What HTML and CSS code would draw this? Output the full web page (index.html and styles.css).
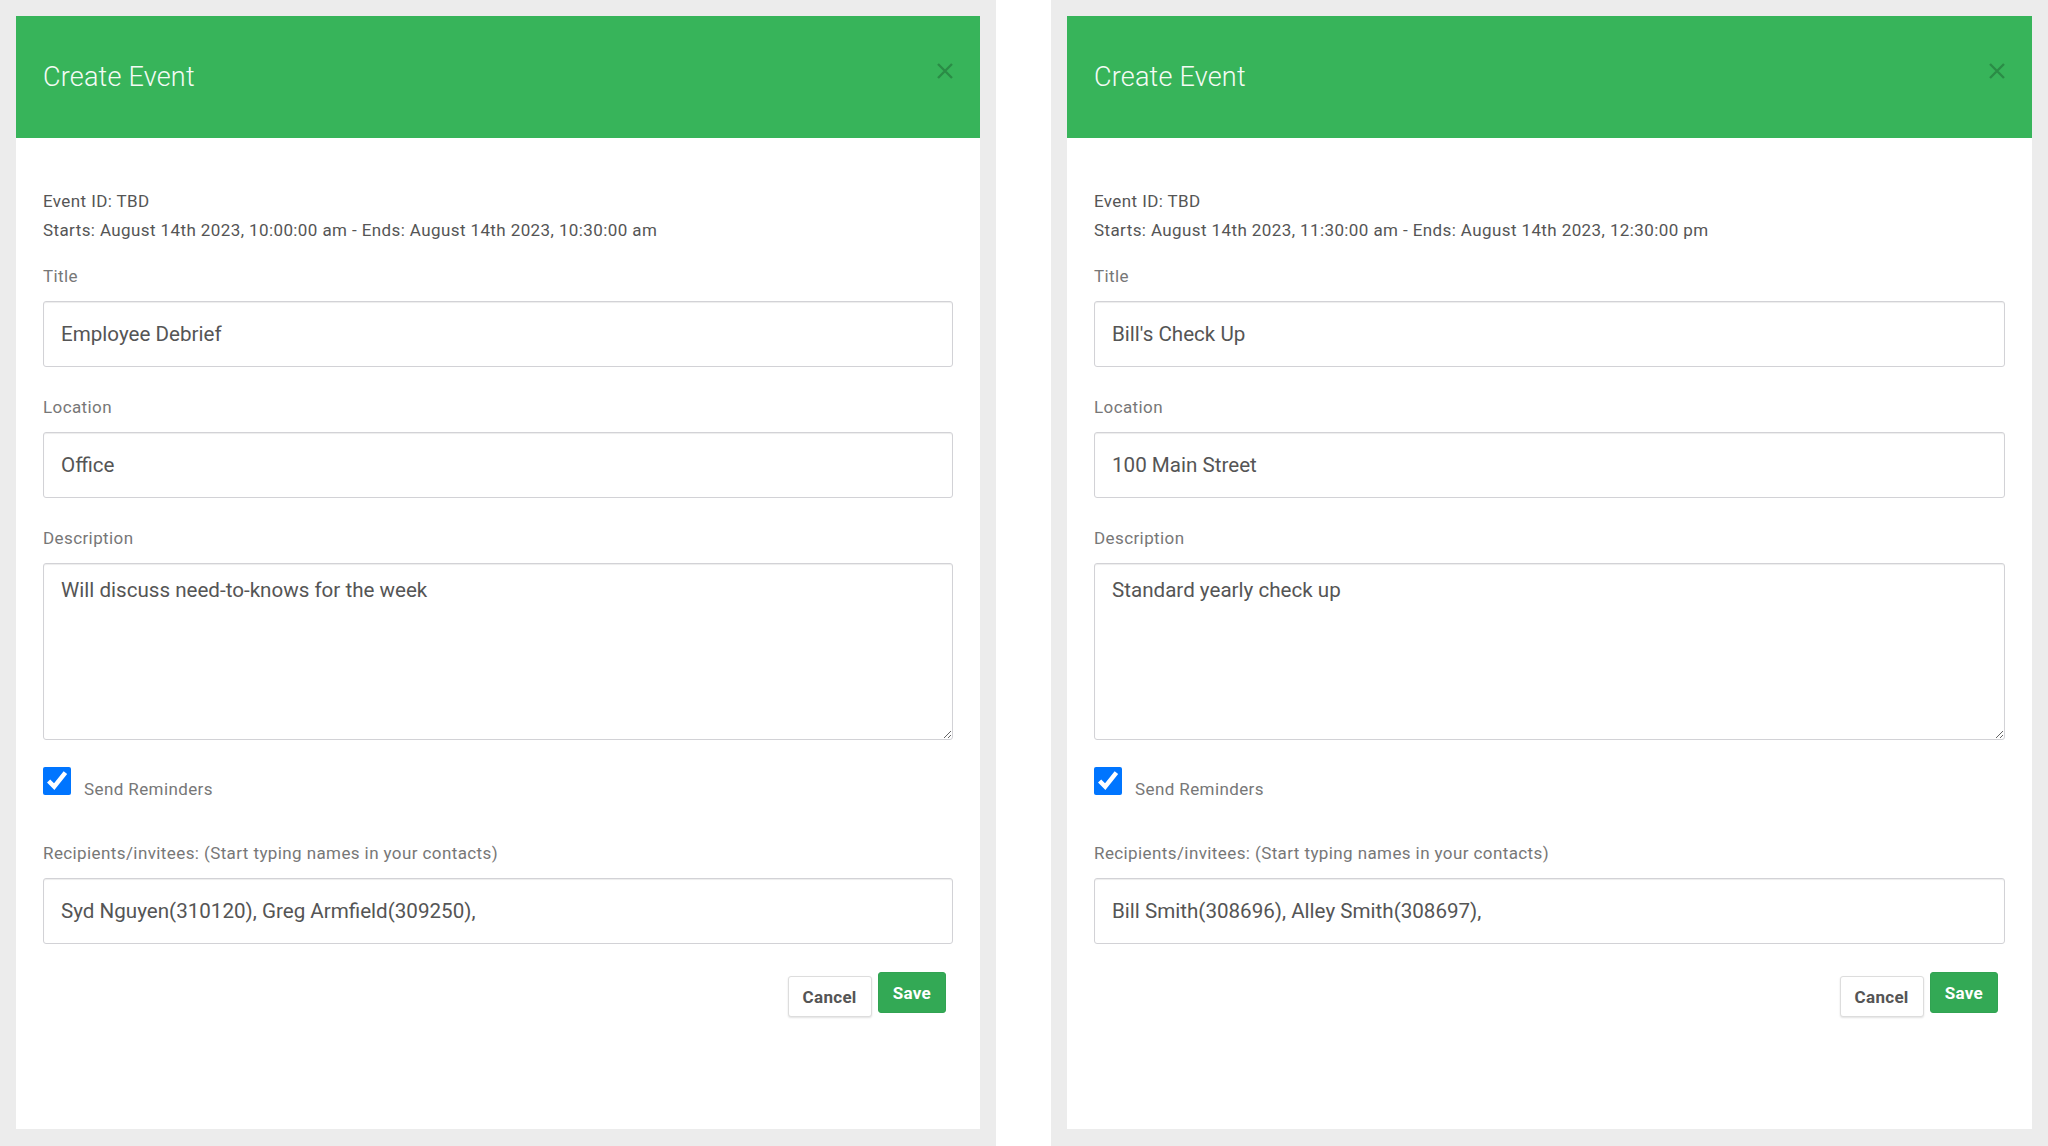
FILE: index.html
```html
<!DOCTYPE html>
<html lang="en">
<head>
    <meta charset="UTF-8">
    <meta name="viewport" content="width=device-width, initial-scale=1.0">
    <title>Create Event</title>
    <link rel="stylesheet" href="styles.css">
</head>
<body>
    <!-- first event -->
    <div class="pane">
        <div class="modal">
            <div class="modal-header">
                <h4>Create Event</h4>
                <button class="close" type="button">
                    <svg width="18" height="18" viewBox="0 0 18 18"><path d="M2 2L16 16M16 2L2 16"/></svg>
                </button>
            </div>
            <div class="modal-body">
                <div class="meta">
                    <div>Event ID: TBD</div>
                    <div>Starts: August 14th 2023, 10:00:00 am - Ends: August 14th 2023, 10:30:00 am</div>
                </div>
                <div class="field">
                    <label>Title</label>
                    <input class="form-control" type="text" value="Employee Debrief">
                </div>
                <div class="field">
                    <label>Location</label>
                    <input class="form-control" type="text" value="Office">
                </div>
                <div class="field field-desc">
                    <label>Description</label>
                    <textarea class="form-control">Will discuss need-to-knows for the week</textarea>
                </div>
                <div class="check">
                    <input type="checkbox" checked>
                    <span>Send Reminders</span>
                </div>
                <div class="field">
                    <label>Recipients/invitees: (Start typing names in your contacts)</label>
                    <input class="form-control" type="text" value="Syd Nguyen(310120), Greg Armfield(309250),">
                </div>
                <div class="actions">
                    <button class="btn btn-default" type="button">Cancel</button>
                    <button class="btn btn-success" type="button">Save</button>
                </div>
            </div>
        </div>
    </div>

    <!-- second event -->
    <div class="pane">
        <div class="modal">
            <div class="modal-header">
                <h4>Create Event</h4>
                <button class="close" type="button">
                    <svg width="18" height="18" viewBox="0 0 18 18"><path d="M2 2L16 16M16 2L2 16"/></svg>
                </button>
            </div>
            <div class="modal-body">
                <div class="meta">
                    <div>Event ID: TBD</div>
                    <div>Starts: August 14th 2023, 11:30:00 am - Ends: August 14th 2023, 12:30:00 pm</div>
                </div>
                <div class="field">
                    <label>Title</label>
                    <input class="form-control" type="text" value="Bill's Check Up">
                </div>
                <div class="field">
                    <label>Location</label>
                    <input class="form-control" type="text" value="100 Main Street">
                </div>
                <div class="field field-desc">
                    <label>Description</label>
                    <textarea class="form-control">Standard yearly check up</textarea>
                </div>
                <div class="check">
                    <input type="checkbox" checked>
                    <span>Send Reminders</span>
                </div>
                <div class="field">
                    <label>Recipients/invitees: (Start typing names in your contacts)</label>
                    <input class="form-control" type="text" value="Bill Smith(308696), Alley Smith(308697),">
                </div>
                <div class="actions">
                    <button class="btn btn-default" type="button">Cancel</button>
                    <button class="btn btn-success" type="button">Save</button>
                </div>
            </div>
        </div>
    </div>
</body>
</html>
```

FILE: styles.css
```css
html, body {
    height: 100%;
}
body {
    margin: 0;
    font-family: Roboto, "Liberation Sans", Arial, sans-serif;
    background: #fff;
    color: #555;
    display: grid;
    grid-template-columns: 996px 1fr;
    column-gap: 55px;
}
.pane {
    background: #ececec;
    padding: 16px 16px 17px;
    display: flex;
}
.modal {
    flex: 1;
    background: #fff;
    display: flex;
    flex-direction: column;
}
.modal-header {
    height: 122px;
    background: #37b45a;
    padding: 0 26px 0 27px;
    display: flex;
    align-items: center;
    justify-content: space-between;
}
.modal-header h4 {
    margin: 0;
    color: #f4fbf5;
    font-size: 27px;
    font-weight: 300;
    letter-spacing: 0.2px;
}
.close {
    background: none;
    border: 0;
    padding: 0;
    margin-bottom: 13px;
    display: flex;
}
.close path {
    stroke: rgba(0, 0, 0, 0.22);
    stroke-width: 2.4;
    fill: none;
}
.modal-body {
    padding: 49px 27px 0;
}
.meta {
    font-size: 17px;
    letter-spacing: 0.4px;
    line-height: 29px;
    color: #555;
    margin-bottom: 22px;
}
.field {
    margin-bottom: 31px;
}
.field label {
    display: block;
    font-size: 17px;
    letter-spacing: 0.4px;
    line-height: 18px;
    color: #777;
    margin-bottom: 16px;
}
.form-control {
    display: block;
    box-sizing: border-box;
    width: 100%;
    height: 66px;
    margin: 0;
    padding: 0 17px;
    font-family: inherit;
    font-size: 20.6px;
    color: #555;
    background: #fff;
    border: 1px solid #d2d2d6;
    border-radius: 3px;
    box-shadow: inset 0 1px 1px rgba(0, 0, 0, 0.075);
    outline: none;
}
textarea.form-control {
    height: 177px;
    padding: 12px 17px;
    line-height: 28px;
    resize: vertical;
}
.field-desc {
    margin-bottom: 27px;
}
.check {
    display: flex;
    align-items: flex-end;
    gap: 13px;
    margin-bottom: 49px;
}
.check input {
    width: 28px;
    height: 28px;
    margin: 0;
}
.check span {
    font-size: 17px;
    letter-spacing: 0.4px;
    line-height: 20px;
    color: #777;
    margin-bottom: -4px;
}
.actions {
    display: flex;
    justify-content: flex-end;
    align-items: flex-start;
    gap: 6px;
    margin-top: -3px;
    padding-right: 7px;
}
.btn {
    height: 41px;
    padding: 0 14px;
    font-family: inherit;
    font-size: 17px;
    letter-spacing: 0.3px;
    font-weight: bold;
    border-radius: 3px;
}
.btn-default {
    margin-top: 4px;
    color: #555;
    background: #fff;
    border: 1px solid #ddd;
    box-shadow: 0 1px 2px rgba(0, 0, 0, 0.12);
}
.btn-success {
    color: #fff;
    background: #33a955;
    border: 1px solid #31a352;
}
```
